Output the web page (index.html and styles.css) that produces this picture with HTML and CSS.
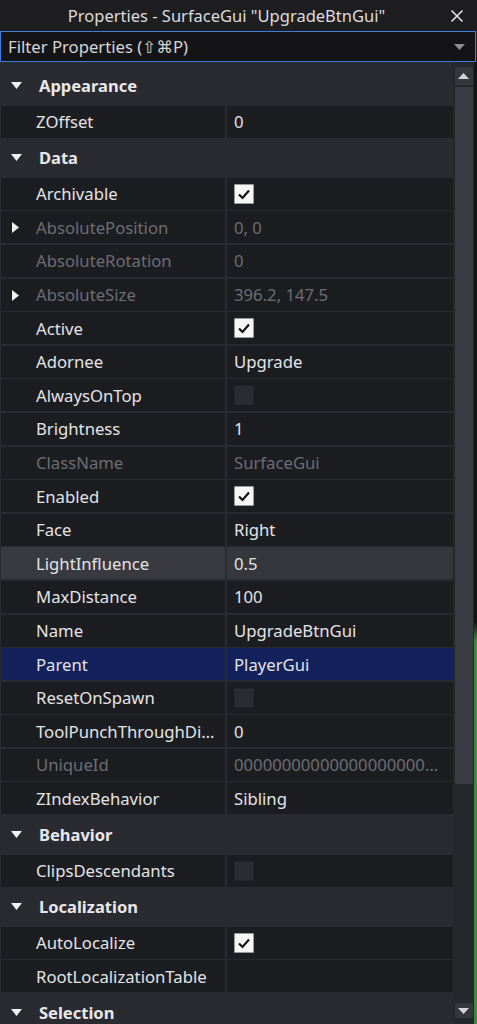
FILE: index.html
```html
<!DOCTYPE html>
<html>
<head>
<meta charset="utf-8">
<link rel="stylesheet" href="styles.css">
</head>
<body>
<div class="window">
  <div class="titlebar">
    <span class="title">Properties - SurfaceGui "UpgradeBtnGui"</span>
    <svg class="close" width="14" height="14" viewBox="0 0 14 14"><path d="M1.5 1.5 L12.5 12.5 M12.5 1.5 L1.5 12.5" stroke="#e2e2e2" stroke-width="1.6" fill="none"/></svg>
  </div>
  <div class="filter">
    <span class="placeholder">Filter Properties (⇧⌘P)</span>
    <svg class="caret" width="11" height="6" viewBox="0 0 11 6"><path d="M0 0 H11 L5.5 6 Z" fill="#8e8f94"/></svg>
  </div>
  <div class="body">
    <div class="list">
      <div class="section"><svg class="tri-down" width="11" height="7" viewBox="0 0 11 7"><path d="M0 0 H11 L5.5 7 Z" fill="#f2f2f2"/></svg><span>Appearance</span></div>
      <div class="row"><div class="name">ZOffset</div><div class="value">0</div></div>

      <div class="section"><svg class="tri-down" width="11" height="7" viewBox="0 0 11 7"><path d="M0 0 H11 L5.5 7 Z" fill="#f2f2f2"/></svg><span>Data</span></div>
      <div class="row"><div class="name">Archivable</div><div class="value"><span class="check on"><svg width="14" height="12" viewBox="0 0 14 12"><path d="M2 6.5 L5.5 10 L12 2.5" stroke="#111" stroke-width="2.2" fill="none"/></svg></span></div></div>
      <div class="row dim"><div class="name"><svg class="tri-right" width="7" height="11" viewBox="0 0 7 11"><path d="M0 0 V11 L7 5.5 Z" fill="#f2f2f2"/></svg>AbsolutePosition</div><div class="value">0, 0</div></div>
      <div class="row dim"><div class="name">AbsoluteRotation</div><div class="value">0</div></div>
      <div class="row dim"><div class="name"><svg class="tri-right" width="7" height="11" viewBox="0 0 7 11"><path d="M0 0 V11 L7 5.5 Z" fill="#f2f2f2"/></svg>AbsoluteSize</div><div class="value">396.2, 147.5</div></div>
      <div class="row"><div class="name">Active</div><div class="value"><span class="check on"><svg width="14" height="12" viewBox="0 0 14 12"><path d="M2 6.5 L5.5 10 L12 2.5" stroke="#111" stroke-width="2.2" fill="none"/></svg></span></div></div>
      <div class="row"><div class="name">Adornee</div><div class="value">Upgrade</div></div>
      <div class="row"><div class="name">AlwaysOnTop</div><div class="value"><span class="check off"></span></div></div>
      <div class="row"><div class="name">Brightness</div><div class="value">1</div></div>
      <div class="row dim"><div class="name">ClassName</div><div class="value">SurfaceGui</div></div>
      <div class="row"><div class="name">Enabled</div><div class="value"><span class="check on"><svg width="14" height="12" viewBox="0 0 14 12"><path d="M2 6.5 L5.5 10 L12 2.5" stroke="#111" stroke-width="2.2" fill="none"/></svg></span></div></div>
      <div class="row"><div class="name">Face</div><div class="value">Right</div></div>
      <div class="row hover"><div class="name">LightInfluence</div><div class="value">0.5</div></div>
      <div class="row"><div class="name">MaxDistance</div><div class="value">100</div></div>
      <div class="row"><div class="name">Name</div><div class="value">UpgradeBtnGui</div></div>
      <div class="row selected"><div class="name">Parent</div><div class="value">PlayerGui</div></div>
      <div class="row"><div class="name">ResetOnSpawn</div><div class="value"><span class="check off"></span></div></div>
      <div class="row"><div class="name">ToolPunchThroughDi…</div><div class="value">0</div></div>
      <div class="row dim"><div class="name">UniqueId</div><div class="value">00000000000000000000…</div></div>
      <div class="row"><div class="name">ZIndexBehavior</div><div class="value">Sibling</div></div>

      <div class="section"><svg class="tri-down" width="11" height="7" viewBox="0 0 11 7"><path d="M0 0 H11 L5.5 7 Z" fill="#f2f2f2"/></svg><span>Behavior</span></div>
      <div class="row"><div class="name">ClipsDescendants</div><div class="value"><span class="check off"></span></div></div>

      <div class="section"><svg class="tri-down" width="11" height="7" viewBox="0 0 11 7"><path d="M0 0 H11 L5.5 7 Z" fill="#f2f2f2"/></svg><span>Localization</span></div>
      <div class="row"><div class="name">AutoLocalize</div><div class="value"><span class="check on"><svg width="14" height="12" viewBox="0 0 14 12"><path d="M2 6.5 L5.5 10 L12 2.5" stroke="#111" stroke-width="2.2" fill="none"/></svg></span></div></div>
      <div class="row"><div class="name">RootLocalizationTable</div><div class="value"></div></div>

      <div class="section"><svg class="tri-down" width="11" height="7" viewBox="0 0 11 7"><path d="M0 0 H11 L5.5 7 Z" fill="#f2f2f2"/></svg><span>Selection</span></div>
    </div>
    <div class="scrollbar">
      <div class="sbtn"><svg width="11" height="6" viewBox="0 0 11 6"><path d="M0 6 H11 L5.5 0 Z" fill="#d4d4d6"/></svg></div>
      <div class="thumb"></div>
      <div class="track"></div>
      <div class="sbtn down"><svg width="11" height="6" viewBox="0 0 11 6"><path d="M0 0 H11 L5.5 6 Z" fill="#d4d4d6"/></svg></div>
    </div>
    <div class="edge"></div>
  </div>
</div>
</body>
</html>
```

FILE: styles.css
```css
* { box-sizing: border-box; }
html, body { margin: 0; padding: 0; background: #1c1c1f; }
body { font-family: "Noto Sans", "DejaVu Sans", sans-serif; font-size: 16.7px; color: #e4e4e6; }

.window { width: 477px; height: 1024px; overflow: hidden; display: flex; flex-direction: column; background: #1c1c1f; }

.titlebar { height: 31px; flex: none; display: flex; align-items: center; justify-content: center; position: relative; background: #1e1e21; }
.title { color: #dcdcde; font-size: 16.5px; margin-left: -24px; }
.close { position: absolute; right: 13px; top: 9px; }

.filter { height: 31px; flex: none; margin: 0 1px 0 0; border: 1.5px solid #3f7fdc; background: #141417; display: flex; align-items: center; padding: 0 10px 0 7px; }
.placeholder { flex: 1; color: #d6d6d8; font-size: 16.7px; }
.caret { flex: none; }

.body { flex: 1; display: flex; min-height: 0; background: #2a2b30; }
.list { width: 453px; flex: none; display: flex; flex-direction: column; gap: 1.6px; padding-top: 5px; background: #2a2b30; overflow: hidden; }

.section { height: 37px; flex: none; display: flex; align-items: center; background: #2a2b30; font-weight: 700; color: #e8e8ea; font-size: 16.5px; }
.tri-down { margin: 0 17px 0 11px; }

.row { height: 32px; flex: none; display: flex; gap: 2px; padding-left: 1px; }
.name, .value { background: #1c1d21; display: flex; align-items: center; min-width: 0; white-space: nowrap; overflow: hidden; }
.name { width: 224px; flex: none; padding-left: 35px; position: relative; }
.value { flex: 1; padding-left: 7px; padding-right: 4px; }
.tri-right { position: absolute; left: 11px; top: 11px; }

.row.dim .name, .row.dim .value { color: #6c6d74; }
.row.hover .name { background: #383a40; }
.row.hover .value { background: #35373d; }
.row.selected .name, .row.selected .value { background: #13225c; }

.check { width: 20px; height: 20px; display: flex; align-items: center; justify-content: center; border-radius: 1px; }
.check.on { background: #f6f6f6; border: 1px solid #9a9a9e; }
.check.off { background: #2b2c31; border: 1px solid #24252a; }

.scrollbar { width: 21px; flex: none; display: flex; flex-direction: column; align-items: center; padding: 5px 0 6px; background: #26272b; }
.sbtn { width: 18px; height: 18px; flex: none; background: #35373d; display: flex; align-items: center; justify-content: center; }
.sbtn.down { height: 15px; }
.thumb { width: 18px; height: 697px; flex: none; margin-top: 2px; background: #393b42; }
.track { flex: 1; }

.edge { width: 3px; flex: none; background: linear-gradient(#141416 0, #141416 560px, #3d8b3c 580px, #3d8b3c 100%); }
```
